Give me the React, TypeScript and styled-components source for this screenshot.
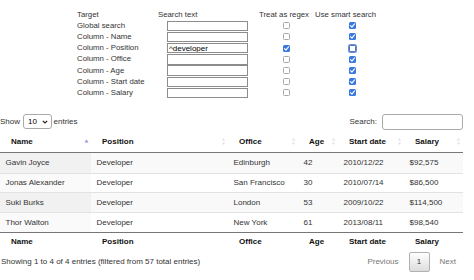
import styled, { createGlobalStyle } from "styled-components";

const GlobalStyle = createGlobalStyle`
  html, body {
    margin: 0;
    padding: 0;
    background: #fff;
  }
  body {
    font-family: "Liberation Sans", Arial, Helvetica, sans-serif;
    font-size: 8px;
    color: #333;
  }
  * {
    box-sizing: border-box;
  }
`;

interface Employee {
	name: string;
	position: string;
	office: string;
	age: number;
	start: string;
	salary: string;
}

const employees: Employee[] = [
	{ name: "Gavin Joyce", position: "Developer", office: "Edinburgh", age: 42, start: "2010/12/22", salary: "$92,575" },
	{ name: "Jonas Alexander", position: "Developer", office: "San Francisco", age: 30, start: "2010/07/14", salary: "$86,500" },
	{ name: "Suki Burks", position: "Developer", office: "London", age: 53, start: "2009/10/22", salary: "$114,500" },
	{ name: "Thor Walton", position: "Developer", office: "New York", age: 61, start: "2013/08/11", salary: "$98,540" },
];

const columns = ["Name", "Position", "Office", "Age", "Start date", "Salary"];
const colWidths = [91, 137, 70, 40, 66, 59];

interface FilterRow {
	label: string;
	value: string;
	regex: boolean;
	smart: boolean;
	focused?: boolean;
}

const filters: FilterRow[] = [
	{ label: "Global search", value: "", regex: false, smart: true },
	{ label: "Column - Name", value: "", regex: false, smart: true },
	{ label: "Column - Position", value: "^developer", regex: true, smart: false, focused: true },
	{ label: "Column - Office", value: "", regex: false, smart: true },
	{ label: "Column - Age", value: "", regex: false, smart: true },
	{ label: "Column - Start date", value: "", regex: false, smart: true },
	{ label: "Column - Salary", value: "", regex: false, smart: true },
];

function Check({ checked, focused }: { checked: boolean; focused?: boolean }) {
	return (
		<CheckBox $checked={checked} $focused={focused}>
			{checked && (
				<svg width="7" height="7" viewBox="0 0 10 10">
					<path d="M2.2 5.2 L4.2 7.2 L7.9 2.8" fill="none" stroke="#fff" strokeWidth="1.6" strokeLinecap="round" strokeLinejoin="round" />
				</svg>
			)}
		</CheckBox>
	);
}

function SortIcon({ asc }: { asc?: boolean }) {
	return (
		<SortSvg width="5" height="9" viewBox="0 0 5 9">
			{asc ? (
				<path d="M2.5 2.6 L4.6 5.4 L0.4 5.4 Z" fill="#9a9adc" />
			) : (
				<>
					<path d="M2.5 1 L4.2 3.4 L0.8 3.4 Z" fill="#e2e2e2" />
					<path d="M2.5 8 L4.2 5.6 L0.8 5.6 Z" fill="#e2e2e2" />
				</>
			)}
		</SortSvg>
	);
}

function App() {
	return (
		<>
			<GlobalStyle />
			<Page>
				<FilterGrid>
					<FilterHead>Target</FilterHead>
					<FilterHead>Search text</FilterHead>
					<FilterHead>Treat as regex</FilterHead>
					<FilterHead>Use smart search</FilterHead>
					{filters.map((f) => (
						<FilterLine key={f.label}>
							<FilterLabel>{f.label}</FilterLabel>
							<Centered>
								<FilterInput defaultValue={f.value} />
							</Centered>
							<Centered>
								<Check checked={f.regex} />
							</Centered>
							<Centered>
								<Check checked={f.smart} focused={f.focused} />
							</Centered>
						</FilterLine>
					))}
				</FilterGrid>

				<Controls>
					<LengthControl>
						Show
						<FakeSelect>
							10
							<svg width="6" height="4" viewBox="0 0 6 4">
								<path d="M0.8 0.8 L3 3 L5.2 0.8" fill="none" stroke="#222" strokeWidth="1.2" />
							</svg>
						</FakeSelect>
						entries
					</LengthControl>
					<SearchControl>
						Search:
						<SearchInput />
					</SearchControl>
				</Controls>

				<DataTable>
					<colgroup>
						{colWidths.map((w, i) => (
							<col key={i} style={{ width: w }} />
						))}
					</colgroup>
					<thead>
						<tr>
							{columns.map((c, i) => (
								<HeadCell key={c}>
									<HeadInner>
										{c}
										<SortIcon asc={i === 0} />
									</HeadInner>
								</HeadCell>
							))}
						</tr>
					</thead>
					<tbody>
						{employees.map((e, r) => (
							<BodyRow key={e.name} $odd={r % 2 === 0} $first={r === 0}>
								<BodyCell>{e.name}</BodyCell>
								<BodyCell>{e.position}</BodyCell>
								<BodyCell>{e.office}</BodyCell>
								<BodyCell>{e.age}</BodyCell>
								<BodyCell>{e.start}</BodyCell>
								<BodyCell>{e.salary}</BodyCell>
							</BodyRow>
						))}
					</tbody>
					<tfoot>
						<tr>
							{columns.map((c) => (
								<FootCell key={c}>{c}</FootCell>
							))}
						</tr>
					</tfoot>
				</DataTable>

				<Bottom>
					<Info>Showing 1 to 4 of 4 entries (filtered from 57 total entries)</Info>
					<Paginate>
						<PageLink>Previous</PageLink>
						<PageButton>1</PageButton>
						<PageLink>Next</PageLink>
					</Paginate>
				</Bottom>
			</Page>
		</>
	);
}

const Page = styled.div`
	width: 463px;
	padding-top: 9.5px;
`;

const FilterGrid = styled.div`
	display: grid;
	grid-template-columns: 81px 101px 56px 76px;
	grid-template-rows: 10.7px;
	grid-auto-rows: 11.2px;
	align-items: center;
	margin-left: 76px;
	font-size: 7.8px;
	color: #333;
`;

const FilterLine = styled.div`
	display: contents;
`;

const FilterHead = styled.div`
	padding-left: 1px;
	line-height: 10px;
	white-space: nowrap;
`;

const FilterLabel = styled.div`
	padding-left: 1px;
	line-height: 10px;
	white-space: nowrap;
`;

const Centered = styled.div`
	display: flex;
	justify-content: center;
	align-items: center;
`;

const FilterInput = styled.input`
	width: 81px;
	height: 10.4px;
	border: 1px solid #8c8c8c;
	padding: 0 1px;
	margin: 0;
	font-family: inherit;
	font-size: 8px;
	color: #000;
	outline: none;
`;

const CheckBox = styled.span<{ $checked: boolean; $focused?: boolean }>`
	display: flex;
	align-items: center;
	justify-content: center;
	width: 7px;
	height: 7px;
	border-radius: 1.5px;
	background: ${(p) => (p.$checked ? "#3a78e0" : "#fff")};
	border: ${(p) => (p.$checked ? "none" : p.$focused ? "1px solid #4d6fbf" : "1px solid #a8a8a8")};
	box-shadow: ${(p) => (p.$focused ? "0 0 0 1px #6f8fd6" : "none")};
`;

const Controls = styled.div`
	display: flex;
	justify-content: space-between;
	align-items: center;
	height: 16px;
	margin-top: 15.4px;
	color: #333;
`;

const LengthControl = styled.div`
	display: flex;
	align-items: center;
	white-space: nowrap;
`;

const FakeSelect = styled.div`
	display: flex;
	align-items: center;
	justify-content: space-between;
	width: 29px;
	height: 15px;
	margin: 0 1.5px 0 3px;
	padding: 0 3px 0 4px;
	border: 1px solid #aaa;
	border-radius: 3px;
	color: #000;
	background: #fff;
`;

const SearchControl = styled.div`
	display: flex;
	align-items: center;
	white-space: nowrap;
`;

const SearchInput = styled.input`
	width: 81px;
	height: 16px;
	margin: 0 0 0 5px;
	border: 1px solid #aaa;
	border-radius: 3px;
	outline: none;
	background: #fff;
`;

const DataTable = styled.table`
	width: 463px;
	table-layout: fixed;
	border-collapse: separate;
	border-spacing: 0;
	margin-top: 1.5px;
`;

const HeadCell = styled.th`
	height: 21.5px;
	padding: 0 2px 0 11px;
	text-align: left;
	font-weight: bold;
	color: #111;
	border-bottom: 1.5px solid #777;
`;

const HeadInner = styled.div`
	display: flex;
	align-items: center;
	justify-content: space-between;
	white-space: nowrap;
`;

const SortSvg = styled.svg`
	flex: none;
`;

const BodyRow = styled.tr<{ $odd: boolean; $first: boolean }>`
	background: ${(p) => (p.$odd ? "#f9f9f9" : "#fff")};

	& > td {
		border-top: ${(p) => (p.$first ? "none" : "1px solid #e2e2e2")};
	}

	& > td:first-child {
		background: ${(p) => (p.$odd ? "#f1f1f1" : "#fafafa")};
	}
`;

const BodyCell = styled.td`
	height: 19.7px;
	padding: 0 5.5px;
	white-space: nowrap;
	color: #333;
	vertical-align: middle;
`;

const FootCell = styled.th`
	height: 19.5px;
	padding: 0 11px;
	text-align: left;
	font-weight: bold;
	color: #111;
	border-top: 1.5px solid #777;
`;

const Bottom = styled.div`
	display: flex;
	justify-content: space-between;
	align-items: center;
	height: 21px;
`;

const Info = styled.div`
	padding-left: 1px;
	color: #333;
	white-space: nowrap;
`;

const Paginate = styled.div`
	display: flex;
	align-items: center;
	gap: 2px;
	margin-right: -1px;
`;

const PageLink = styled.span`
	padding: 0 8px;
	color: #777;
`;

const PageButton = styled.span`
	display: flex;
	align-items: center;
	justify-content: center;
	width: 21px;
	height: 20px;
	border: 1px solid #b0b0b0;
	border-radius: 2px;
	background: linear-gradient(to bottom, #fff 0%, #dcdcdc 100%);
	color: #333;
`;

export default App;
